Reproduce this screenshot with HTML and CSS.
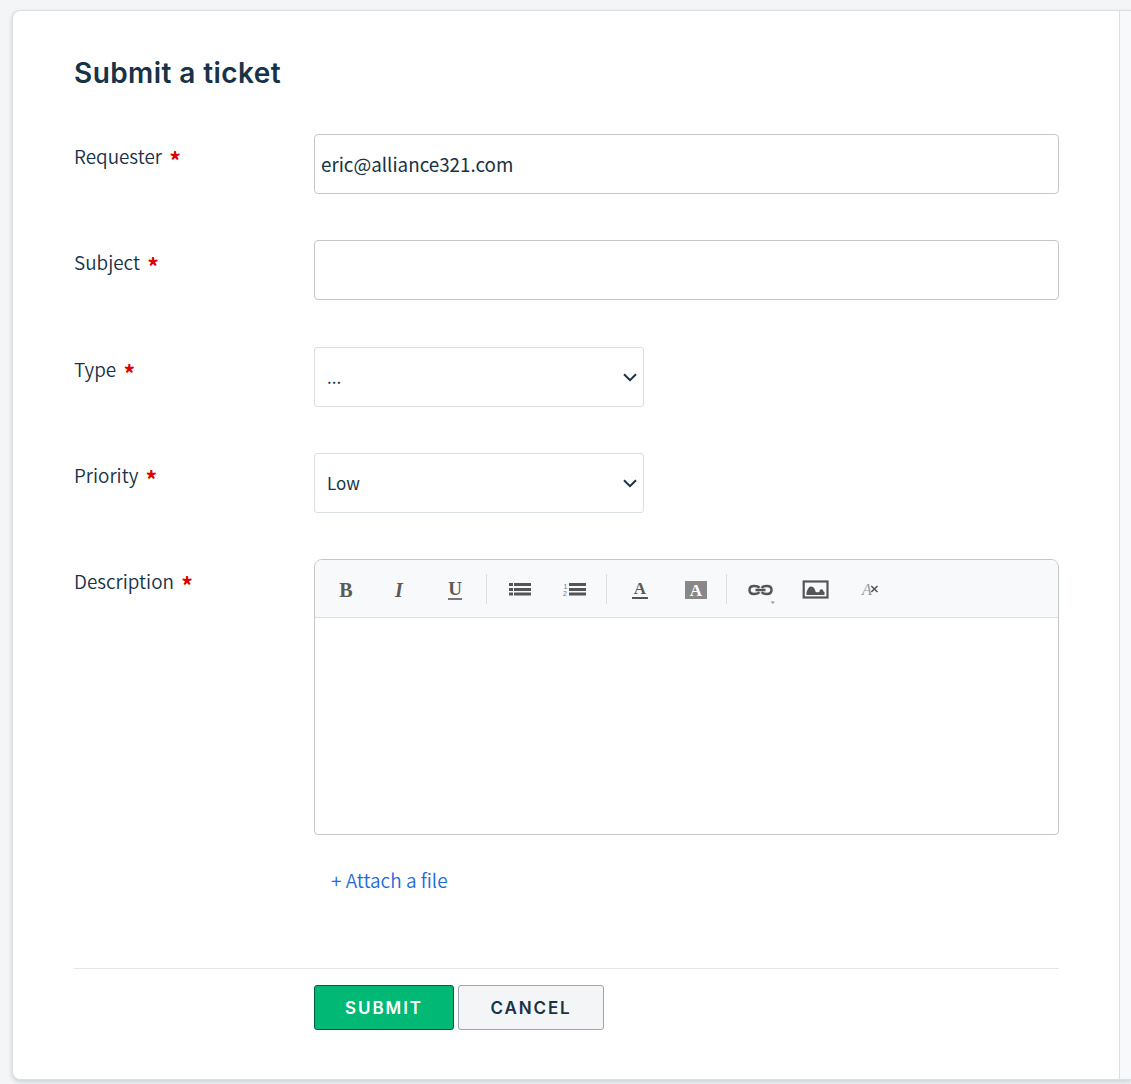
FILE: index.html
```html
<!DOCTYPE html>
<html lang="en">
<head>
    <meta charset="UTF-8" />
    <meta name="viewport" content="width=device-width, initial-scale=1.0" />
    <title>Submit a ticket</title>
    <link rel="stylesheet" href="styles.css">
</head>
<body>
    <div class="page-card">
        <main class="ticket">
            <h1 class="ticket-title">Submit a ticket</h1>

            <form class="ticket-form">
                <div class="form-row">
                    <label class="form-label" for="requester">Requester <span class="required">*</span></label>
                    <input class="form-input" id="requester" type="text" value="eric@alliance321.com">
                </div>

                <div class="form-row">
                    <label class="form-label" for="subject">Subject <span class="required">*</span></label>
                    <input class="form-input" id="subject" type="text">
                </div>

                <div class="form-row">
                    <label class="form-label" for="type">Type <span class="required">*</span></label>
                    <div class="select-wrap">
                        <select class="form-select" id="type"><option>...</option></select>
                        <svg class="chevron" width="14" height="9" viewBox="0 0 14 9"><path d="M1 1.2l6 6 6-6" /></svg>
                    </div>
                </div>

                <div class="form-row">
                    <label class="form-label" for="priority">Priority <span class="required">*</span></label>
                    <div class="select-wrap">
                        <select class="form-select" id="priority"><option>Low</option></select>
                        <svg class="chevron" width="14" height="9" viewBox="0 0 14 9"><path d="M1 1.2l6 6 6-6" /></svg>
                    </div>
                </div>

                <div class="form-row">
                    <label class="form-label">Description <span class="required">*</span></label>
                    <div class="editor">
                        <div class="toolbar">
                            <div class="tool-group group-text">
                                <span class="tool tool-letter">B</span>
                                <span class="tool tool-letter tool-italic">I</span>
                                <span class="tool tool-letter tool-underline">U</span>
                            </div>
                            <div class="tool-group group-list">
                                <!-- Bullet list -->
                                <svg class="tool-icon" width="22" height="14" viewBox="0 0 22 14">
                                    <path d="M0 0h4v3H0zM5 0h17v3H5zM0 5h4v3H0zM5 5h17v3H5zM0 9.500h4v3H0zM5 9.500h17v3H5z" />
                                </svg>
                                <!-- Numbered list -->
                                <svg class="tool-icon" width="23" height="14" viewBox="0 0 23 14">
                                    <path d="M6 0h17v3H6zM6 5h17v3H6zM6 9.500h17v3H6z" />
                                    <text class="list-number" x="0.500" y="6">1</text>
                                    <text class="list-number" x="0" y="12.500">2</text>
                                </svg>
                            </div>
                            <div class="tool-group group-color">
                                <span class="tool tool-letter tool-color">A</span>
                                <span class="tool tool-letter tool-highlight">A</span>
                            </div>
                            <div class="tool-group group-insert">
                                <!-- Link with dropdown arrow -->
                                <svg class="tool-icon icon-link" width="28" height="28" viewBox="0 0 28 28">
                                    <path class="stroke" d="M12.300 11.800C11.300 10.200 9.500 10 7 10 4 10 2.500 11.600 2.500 14s1.500 4 4.500 4c2.500 0 4.300-.2 5.300-1.800M14.700 11.800c1-1.600 2.800-1.800 5.300-1.800 3 0 4.500 1.600 4.500 4s-1.500 4-4.500 4c-2.500 0-4.300-.2-5.300-1.800M8.500 14h10" />
                                    <path class="faint" d="M23.500 25.500h4.500l-2.200 2.500z" />
                                </svg>
                                <!-- Image -->
                                <svg class="tool-icon icon-image" width="27" height="19" viewBox="0 0 27 19">
                                    <rect class="frame" x="1.700" y="1.500" width="23.800" height="16" />
                                    <path d="M4.500 15v-3c1-1 1-4.500 4-5.500 4-.2 4.500 3.500 5 5 1.500 1.300 3 .8 4 .2-.2-3 3.500-3.200 3.800-.5l1.200.8v3z" />
                                </svg>
                                <!-- Clear formatting -->
                                <svg class="tool-icon icon-clear" width="18" height="15" viewBox="0 0 18 15">
                                    <text class="clear-letter" x="1" y="13">A</text>
                                    <path class="cross" d="M10.300 4l6.200 6M16.500 4l-6.200 6" />
                                </svg>
                            </div>
                        </div>
                        <div class="editor-body" contenteditable="true"></div>
                    </div>
                </div>

                <div class="attach">
                    <a class="attach-link">+ Attach a file</a>
                </div>

                <div class="form-actions">
                    <button class="btn btn-submit" type="button">SUBMIT</button>
                    <button class="btn btn-cancel" type="button">CANCEL</button>
                </div>
            </form>
        </main>
        <aside class="sidebar"></aside>
    </div>
</body>
</html>
```

FILE: styles.css
```css
/* --- Reset & Global Styles --- */
* {
    margin: 0;
    padding: 0;
    box-sizing: border-box;
}

body {
    height: 1084px;
    padding: 10px 0 0 12px;
    overflow: hidden;
    background-color: #f3f5f7;
    color: #183247;
    font-family: "Noto Sans CJK SC", "Open Sans", sans-serif;
    font-size: 18.800px;
}

/* --- Card --- */
.page-card {
    display: flex;
    height: 1070px;
    overflow: hidden;
    background-color: #fff;
    border: 1px solid #dadfe3;
    border-right: 0;
    border-radius: 8px 0 0 8px;
    box-shadow: 0 2px 4px rgba(24, 50, 71, 0.18);
}

.ticket {
    width: 1107px;
    padding: 40px 60px 0 61px;
    border-right: 1px solid #dadfe3;
}

.sidebar {
    flex: 1;
    background-color: #f8f9fb;
}

.ticket-title {
    height: 83px;
    font-family: Inter, sans-serif;
    font-size: 28px;
    font-weight: 600;
    letter-spacing: 0.420px;
    line-height: 44px;
}

/* --- Form rows --- */
.form-row {
    display: grid;
    grid-template-columns: 240px 1fr;
    margin-bottom: 46.300px;
}

.form-label {
    padding-top: 7px;
    font-size: 18.900px;
    font-weight: 350;
    line-height: 30px;
}

.required {
    display: inline-block;
    height: 20px;
    margin: 4px 0 0 3px;
    color: #d00;
    font-size: 23px;
    font-weight: 700;
    line-height: 30px;
    vertical-align: top;
}

.form-input {
    width: 745px;
    height: 60px;
    padding: 0 6px 1px;
    background: #fff;
    border: 1px solid #c4c6c9;
    border-radius: 4px;
    color: #183247;
    font: inherit;
    outline: none;
}

.select-wrap {
    display: grid;
    width: 330px;
    height: 60px;
    align-items: center;
}

.form-select {
    grid-area: 1 / 1;
    width: 100%;
    height: 60px;
    padding: 0 12px;
    appearance: none;
    background: #fff;
    border: 1px solid #dadfe3;
    border-radius: 3px;
    color: #183247;
    font: inherit;
    font-size: 17px;
}

.chevron {
    grid-area: 1 / 1;
    justify-self: end;
    margin: 1px 7px 0 0;
    fill: none;
    stroke: #183247;
    stroke-width: 2;
}

/* --- Editor --- */
.editor {
    width: 745px;
    height: 276px;
    overflow: hidden;
    border: 1px solid #c4c6c9;
    border-radius: 8px 8px 4px 4px;
}

.toolbar {
    display: flex;
    align-items: center;
    height: 58px;
    background-color: #f8f9fb;
    border-bottom: 1px solid #dadfe3;
}

.editor-body {
    height: 216px;
    outline: none;
}

.tool-group {
    display: flex;
    align-items: center;
    height: 30px;
    padding-top: 2px;
    border-right: 1px solid #dadfe3;
}

.group-text {
    width: 172px;
    padding-left: 21px;
    gap: 33px;
}

.group-list {
    width: 120px;
    padding-left: 22px;
    gap: 32px;
}

.group-color {
    width: 120px;
    padding-left: 25px;
    gap: 37px;
}

.group-insert {
    padding-left: 20px;
    border-right: 0;
}

.tool {
    width: 20px;
    color: #5a5a5a;
    text-align: center;
}

.tool-letter {
    font-family: "Liberation Serif", serif;
    font-size: 20px;
    font-weight: 700;
    line-height: 20px;
}

.tool-italic {
    font-style: italic;
}

.tool-underline {
    width: 14px;
    height: 20px;
    margin-left: 6px;
    border-bottom: 2px solid #777;
    font-size: 19px;
    line-height: 18px;
}

.tool-color {
    width: 16px;
    height: 18px;
    border-bottom: 2px solid #555;
    font-size: 17px;
    line-height: 16px;
}

.tool-highlight {
    width: 22px;
    height: 18px;
    background-color: #888;
    color: #fff;
    font-size: 17px;
    line-height: 19px;
}

.tool-icon {
    fill: #555;
}

.tool-icon .stroke {
    fill: none;
    stroke: #555;
    stroke-width: 2.500;
}

.tool-icon .faint {
    fill: #999;
}

.tool-icon .frame {
    fill: none;
    stroke: #555;
    stroke-width: 2.200;
}

.icon-image {
    margin-left: 27px;
}

.icon-clear {
    margin-left: 32px;
}

.icon-clear .cross {
    fill: none;
    stroke: #555;
    stroke-width: 1.600;
}

.clear-letter {
    fill: #999;
    font: italic 16px "Liberation Serif", serif;
}

.list-number {
    fill: #777;
    font: 7px "Liberation Sans", sans-serif;
}

/* --- Attachment & buttons --- */
.attach {
    height: 103px;
    margin: -16px 0 0 257px;
}

.attach-link {
    color: #1f6bd6;
    font-size: 19px;
    font-weight: 350;
    line-height: 30px;
}

.form-actions {
    display: flex;
    gap: 4px;
    padding: 16px 0 0 240px;
    border-top: 1px solid #e3e6e8;
}

.btn {
    height: 45px;
    border-radius: 3px;
    font-family: Inter, sans-serif;
    font-size: 17px;
    font-weight: 600;
    letter-spacing: 1.900px;
}

.btn-submit {
    width: 140px;
    background-color: #02b875;
    border: 1px solid #015c3a;
    color: #fff;
}

.btn-cancel {
    width: 146px;
    background-color: #f3f5f7;
    border: 1px solid #9aa6b5;
    color: #183247;
}
```
